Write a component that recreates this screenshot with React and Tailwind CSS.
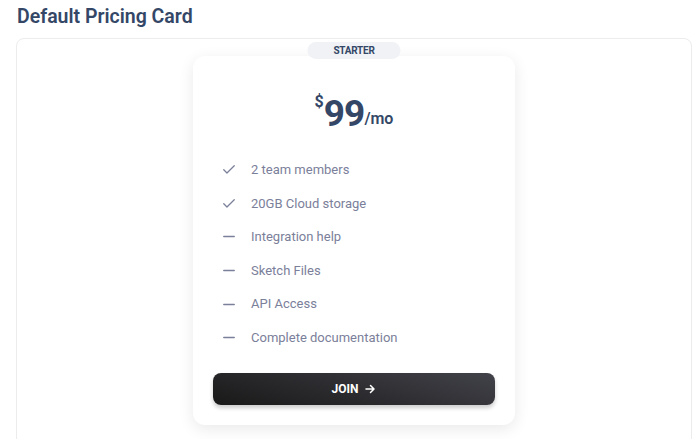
import React from "react";

const features = [
  { ok: true, label: "2 team members" },
  { ok: true, label: "20GB Cloud storage" },
  { ok: false, label: "Integration help" },
  { ok: false, label: "Sketch Files" },
  { ok: false, label: "API Access" },
  { ok: false, label: "Complete documentation" },
];

function Check() {
  return (
    <svg width="15" height="15" viewBox="0 0 24 24" fill="none" stroke="#7b809a" strokeWidth="2.2" strokeLinecap="round" strokeLinejoin="round">
      <path d="M3 12.5l5.5 5.5L21 5.5" />
    </svg>
  );
}

function Dash() {
  return (
    <svg width="15" height="15" viewBox="0 0 24 24" fill="none" stroke="#7b809a" strokeWidth="2.4" strokeLinecap="round">
      <path d="M3 12h18" />
    </svg>
  );
}

export default function App() {
  return (
    <div className="w-[700px] h-[439px] overflow-hidden bg-white" style={{ fontFamily: "Roboto, 'Liberation Sans', sans-serif" }}>
      <h2 className="pl-[17px] pt-[3px] text-[19.5px] leading-[28px] font-semibold text-[#344767]">Default Pricing Card</h2>
      <div className="ml-4 mt-[7px] w-[676px] h-[420px] border border-[#ececec] rounded-lg flex justify-center">
        <div className="relative mt-[17px] w-[322px] h-[369px] bg-white rounded-xl shadow-[0_4px_16px_rgba(0,0,0,0.09)] px-5 pt-[38px]">
          <div className="absolute -top-[14px] left-1/2 -translate-x-1/2 w-[93px] h-[17px] rounded-full bg-[#f0f2f5] flex items-center justify-center text-[10px] font-bold text-[#344767] tracking-tight">
            STARTER
          </div>
          <div className="flex items-start justify-center text-[#344767] font-bold">
            <span className="text-[16px] leading-none mt-[0px]">$</span>
            <span className="text-[37px] leading-[40px] tracking-tight">99</span>
            <span className="text-[16px] leading-none self-end mb-[7px] font-semibold">/mo</span>
          </div>
          <ul className="mt-[19px] ml-[9px]">
            {features.map((f) => (
              <li key={f.label} className="h-[33.6px] flex items-center text-[13px] text-[#7b809a]">
                <span className="w-[14px] flex justify-center">{f.ok ? <Check /> : <Dash />}</span>
                <span className="ml-[15px]">{f.label}</span>
              </li>
            ))}
          </ul>
          <button className="mt-[18px] w-full h-[32px] rounded-lg bg-[linear-gradient(195deg,#42424a,#191919)] shadow-[0_3px_4px_rgba(0,0,0,0.2)] text-white text-[12px] font-bold flex items-center justify-center gap-1.5">
            JOIN
            <svg width="12" height="12" viewBox="0 0 24 24" fill="none" stroke="white" strokeWidth="3" strokeLinecap="round" strokeLinejoin="round">
              <path d="M4 12h15M13 5l7 7-7 7" />
            </svg>
          </button>
        </div>
      </div>
    </div>
  );
}
